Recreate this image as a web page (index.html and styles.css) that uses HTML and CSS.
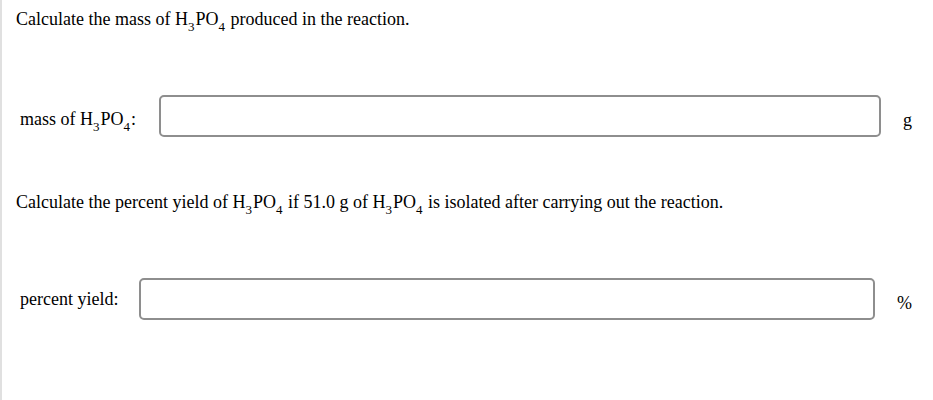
FILE: index.html
```html
<!DOCTYPE html>
<html lang="en">
<head>
    <meta charset="UTF-8">
    <meta name="viewport" content="width=device-width, initial-scale=1.0">
    <title>Reaction Yield</title>
    <link rel="stylesheet" href="styles.css">
</head>
<body>
    <div class="problem">
        <!-- Part 1: theoretical mass -->
        <p class="question">Calculate the mass of H<sub>3</sub>PO<sub>4</sub> produced in the reaction.</p>
        <div class="answer-row">
            <label for="mass" class="answer-label label-sub">mass of H<sub>3</sub>PO<sub>4</sub>:</label>
            <input type="text" id="mass" class="answer-input">
            <span class="unit">g</span>
        </div>

        <!-- Part 2: percent yield -->
        <p class="question">Calculate the percent yield of H<sub>3</sub>PO<sub>4</sub> if 51.0 g of H<sub>3</sub>PO<sub>4</sub> is isolated after carrying out the reaction.</p>
        <div class="answer-row">
            <label for="yield" class="answer-label">percent yield:</label>
            <input type="text" id="yield" class="answer-input">
            <span class="unit">%</span>
        </div>
    </div>
</body>
</html>
```

FILE: styles.css
```css
body {
    margin: 0;
    padding: 0;
    background-color: #fff;
    font-family: "Liberation Serif", "Times New Roman", serif;
    font-size: 18px;
    color: #000;
}
.problem {
    min-height: 400px;
    box-sizing: border-box;
    border-left: 2px solid #e0e0e0;
    padding: 9px 21px 0 14px;
}
.question {
    margin: 55px 0 0;
    line-height: 20px;
}
.question:first-child {
    margin-top: 0;
}
sub {
    font-size: 13px;
    line-height: 0;
    vertical-align: -6px;
    padding-right: 1px;
}
.answer-row {
    display: flex;
    align-items: center;
    margin-top: 66px;
}
.answer-label {
    padding-left: 4px;
    margin-right: 21px;
    line-height: 20px;
}
.label-sub {
    padding-top: 6px;
    margin-right: 23px;
}
.answer-input {
    flex: 1;
    height: 42px;
    box-sizing: border-box;
    border: 2px solid #8e8e8e;
    border-radius: 5px;
    background: #fff;
    font: inherit;
    padding: 0 8px;
}
.unit {
    margin-left: 22px;
    padding-top: 7px;
    line-height: 20px;
}
```
